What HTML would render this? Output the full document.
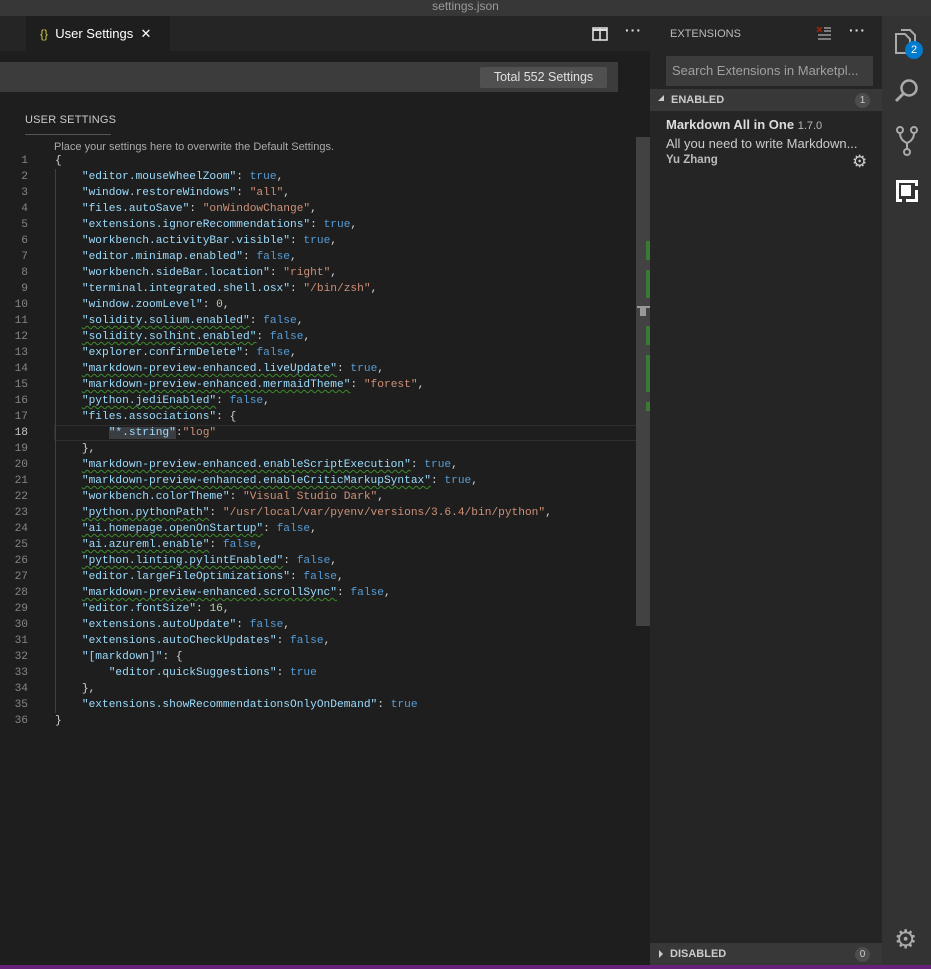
<!DOCTYPE html>
<html><head><meta charset="utf-8"><style>
*{margin:0;padding:0;box-sizing:border-box}
body{width:931px;height:969px;background:#1e1e1e;position:relative;overflow:hidden;font-family:"Liberation Sans",sans-serif;color:#ccc}
.abs{position:absolute}
#title{left:0;top:0;width:931px;height:16px;background:#373737;color:#9a9a9a;font-size:12px;text-align:center;line-height:12px;padding-top:0}
#tabs{left:0;top:16px;width:650px;height:35px;background:#252526}
#tab{left:26px;top:16px;width:144px;height:35px;background:#1e1e1e;font-size:13px;color:#fff;line-height:35px;padding-left:14px}
#hdr{left:0;top:62px;width:618px;height:30px;background:#3c3c3c}
#btn{left:480px;top:67px;width:127px;height:21px;background:#505050;color:#e0e0e0;font-size:12.5px;line-height:21px;text-align:center;border-radius:2px}
#us{left:25px;top:114px;font-size:11px;color:#ccc;letter-spacing:.2px}
#usl{left:25px;top:134px;width:86px;height:1px;background:#555}
#ph{left:54px;top:141px;font-size:11px;color:#aaa}
#code{left:0;top:153px;font-family:"Liberation Mono",monospace;font-size:11.2px;line-height:16px;white-space:pre}
.ln{display:inline-block;width:28px;text-align:right;color:#858585;margin-right:27px}
.k{color:#9cdcfe}.s{color:#ce9178}.b{color:#569cd6}.n{color:#b5cea8}.p{color:#d4d4d4}
.w{text-decoration:underline wavy #3f8a2a;text-decoration-thickness:1px;text-underline-offset:2px}
#guide{left:55px;top:169px;width:1px;height:544px;background:#404040}
#cur{left:54px;top:425px;width:596px;height:16px;border:1px solid #2e2e2e}
#sb{left:636px;top:137px;width:14px;height:489px;background:#424242}
#side{left:650px;top:16px;width:232px;height:949px;background:#252526}
#act{left:882px;top:16px;width:49px;height:949px;background:#333}
#status{left:0;top:965px;width:931px;height:4px;background:#68217a}
</style></head><body>
<div class="abs" id="title">settings.json</div>
<div class="abs" id="tabs"></div>
<div class="abs" id="tab"><span style="color:#cbcb41;font-size:12px">{}</span>&nbsp; User Settings &nbsp;<span style="font-size:13px">✕</span></div>
<svg class="abs" style="left:592px;top:27px" width="16" height="14"><rect x="1" y="1" width="14" height="12" fill="none" stroke="#ddd" stroke-width="1.6"/><line x1="8" y1="1" x2="8" y2="13" stroke="#ddd" stroke-width="1.6"/><line x1="1" y1="3" x2="15" y2="3" stroke="#ddd" stroke-width="2"/></svg>
<div class="abs" style="left:625px;top:22px;color:#ddd;font-size:14px;font-weight:bold;letter-spacing:1px">···</div>
<div class="abs" id="hdr"></div>
<div class="abs" id="btn">Total 552 Settings</div>
<div class="abs" id="us">USER SETTINGS</div>
<div class="abs" id="usl"></div>
<div class="abs" id="ph">Place your settings here to overwrite the Default Settings.</div>
<div class="abs" id="cur"></div>
<div class="abs" id="guide"></div>
<div class="abs" id="code"><span class="ln">1</span><span class="p">{</span>
<span class="ln">2</span>    <span class="k">"editor.mouseWheelZoom"</span><span class="p">: </span><span class="b">true</span><span class="p">,</span>
<span class="ln">3</span>    <span class="k">"window.restoreWindows"</span><span class="p">: </span><span class="s">"all"</span><span class="p">,</span>
<span class="ln">4</span>    <span class="k">"files.autoSave"</span><span class="p">: </span><span class="s">"onWindowChange"</span><span class="p">,</span>
<span class="ln">5</span>    <span class="k">"extensions.ignoreRecommendations"</span><span class="p">: </span><span class="b">true</span><span class="p">,</span>
<span class="ln">6</span>    <span class="k">"workbench.activityBar.visible"</span><span class="p">: </span><span class="b">true</span><span class="p">,</span>
<span class="ln">7</span>    <span class="k">"editor.minimap.enabled"</span><span class="p">: </span><span class="b">false</span><span class="p">,</span>
<span class="ln">8</span>    <span class="k">"workbench.sideBar.location"</span><span class="p">: </span><span class="s">"right"</span><span class="p">,</span>
<span class="ln">9</span>    <span class="k">"terminal.integrated.shell.osx"</span><span class="p">: </span><span class="s">"/bin/zsh"</span><span class="p">,</span>
<span class="ln">10</span>    <span class="k">"window.zoomLevel"</span><span class="p">: </span><span class="n">0</span><span class="p">,</span>
<span class="ln">11</span>    <span class="k w">"solidity.solium.enabled"</span><span class="p">: </span><span class="b">false</span><span class="p">,</span>
<span class="ln">12</span>    <span class="k w">"solidity.solhint.enabled"</span><span class="p">: </span><span class="b">false</span><span class="p">,</span>
<span class="ln">13</span>    <span class="k">"explorer.confirmDelete"</span><span class="p">: </span><span class="b">false</span><span class="p">,</span>
<span class="ln">14</span>    <span class="k w">"markdown-preview-enhanced.liveUpdate"</span><span class="p">: </span><span class="b">true</span><span class="p">,</span>
<span class="ln">15</span>    <span class="k w">"markdown-preview-enhanced.mermaidTheme"</span><span class="p">: </span><span class="s">"forest"</span><span class="p">,</span>
<span class="ln">16</span>    <span class="k w">"python.jediEnabled"</span><span class="p">: </span><span class="b">false</span><span class="p">,</span>
<span class="ln">17</span>    <span class="k">"files.associations"</span><span class="p">: {</span>
<span class="ln" style="color:#c6c6c6">18</span>        <span class="k" style="background:#3a3d41">"*.string"</span><span class="p">:</span><span class="s">"log"</span>
<span class="ln">19</span>    <span class="p">},</span>
<span class="ln">20</span>    <span class="k w">"markdown-preview-enhanced.enableScriptExecution"</span><span class="p">: </span><span class="b">true</span><span class="p">,</span>
<span class="ln">21</span>    <span class="k w">"markdown-preview-enhanced.enableCriticMarkupSyntax"</span><span class="p">: </span><span class="b">true</span><span class="p">,</span>
<span class="ln">22</span>    <span class="k">"workbench.colorTheme"</span><span class="p">: </span><span class="s">"Visual Studio Dark"</span><span class="p">,</span>
<span class="ln">23</span>    <span class="k w">"python.pythonPath"</span><span class="p">: </span><span class="s">"/usr/local/var/pyenv/versions/3.6.4/bin/python"</span><span class="p">,</span>
<span class="ln">24</span>    <span class="k w">"ai.homepage.openOnStartup"</span><span class="p">: </span><span class="b">false</span><span class="p">,</span>
<span class="ln">25</span>    <span class="k w">"ai.azureml.enable"</span><span class="p">: </span><span class="b">false</span><span class="p">,</span>
<span class="ln">26</span>    <span class="k w">"python.linting.pylintEnabled"</span><span class="p">: </span><span class="b">false</span><span class="p">,</span>
<span class="ln">27</span>    <span class="k">"editor.largeFileOptimizations"</span><span class="p">: </span><span class="b">false</span><span class="p">,</span>
<span class="ln">28</span>    <span class="k w">"markdown-preview-enhanced.scrollSync"</span><span class="p">: </span><span class="b">false</span><span class="p">,</span>
<span class="ln">29</span>    <span class="k">"editor.fontSize"</span><span class="p">: </span><span class="n">16</span><span class="p">,</span>
<span class="ln">30</span>    <span class="k">"extensions.autoUpdate"</span><span class="p">: </span><span class="b">false</span><span class="p">,</span>
<span class="ln">31</span>    <span class="k">"extensions.autoCheckUpdates"</span><span class="p">: </span><span class="b">false</span><span class="p">,</span>
<span class="ln">32</span>    <span class="k">"[markdown]"</span><span class="p">: {</span>
<span class="ln">33</span>        <span class="k">"editor.quickSuggestions"</span><span class="p">: </span><span class="b">true</span>
<span class="ln">34</span>    <span class="p">},</span>
<span class="ln">35</span>    <span class="k">"extensions.showRecommendationsOnlyOnDemand"</span><span class="p">: </span><span class="b">true</span>
<span class="ln">36</span><span class="p">}</span></div>
<div class="abs" id="sb"></div>
<div class="abs" style="left:646px;top:241px;width:4px;height:19px;background:#3b7a34"></div>
<div class="abs" style="left:646px;top:270px;width:4px;height:28px;background:#3b7a34"></div>
<div class="abs" style="left:646px;top:326px;width:4px;height:19px;background:#3b7a34"></div>
<div class="abs" style="left:646px;top:355px;width:4px;height:37px;background:#3b7a34"></div>
<div class="abs" style="left:646px;top:402px;width:4px;height:9px;background:#3b7a34"></div>
<div class="abs" style="left:637px;top:306px;width:13px;height:2px;background:#999"></div>
<div class="abs" style="left:640px;top:307px;width:6px;height:9px;background:#999"></div>
<div class="abs" id="side"></div>
<div class="abs" style="left:670px;top:28px;font-size:11px;color:#bbb">EXTENSIONS</div>
<svg class="abs" style="left:816px;top:26px" width="16" height="15"><path d="M1 1l5 5M6 1l-5 5" stroke="#a1260d" stroke-width="1.3"/><path d="M8 2h7M8 5h7M2 9h13M2 13h13" stroke="#999" stroke-width="1.5"/></svg>
<div class="abs" style="left:849px;top:22px;color:#ddd;font-size:14px;font-weight:bold;letter-spacing:1px">···</div>
<div class="abs" style="left:666px;top:56px;width:207px;height:30px;background:#3c3c3c;color:#a0a0a0;font-size:13px;line-height:30px;padding-left:6px;white-space:nowrap;overflow:hidden">Search Extensions in Marketpl...</div>
<div class="abs" style="left:650px;top:89px;width:232px;height:22px;background:#383838"></div>
<div class="abs" style="left:658px;top:95px;width:0;height:0;border-left:6px solid transparent;border-bottom:6px solid #ccc"></div>
<div class="abs" style="left:671px;top:94px;font-size:11px;font-weight:bold;color:#ccc">ENABLED</div>
<div class="abs" style="left:855px;top:93px;width:15px;height:15px;border-radius:8px;background:#4d4d4d;color:#ccc;font-size:10px;text-align:center;line-height:15px">1</div>
<div class="abs" style="left:666px;top:117px;font-size:13px;font-weight:bold;color:#ddd">Markdown All in One <span style="font-weight:normal;font-size:11px;color:#bbb">1.7.0</span></div>
<div class="abs" style="left:666px;top:136px;font-size:13px;color:#ccc">All you need to write Markdown...</div>
<div class="abs" style="left:666px;top:154px;font-size:11.5px;font-weight:bold;color:#bbb">Yu Zhang</div>
<div class="abs" style="left:852px;top:152px;font-size:17px;color:#ccc">⚙</div>
<div class="abs" style="left:650px;top:943px;width:232px;height:22px;background:#383838"></div>
<div class="abs" style="left:659px;top:950px;width:0;height:0;border-top:4px solid transparent;border-bottom:4px solid transparent;border-left:4px solid #ccc"></div>
<div class="abs" style="left:670px;top:948px;font-size:11px;font-weight:bold;color:#ccc">DISABLED</div>
<div class="abs" style="left:855px;top:947px;width:15px;height:15px;border-radius:8px;background:#4d4d4d;color:#ccc;font-size:10px;text-align:center;line-height:15px">0</div>
<div class="abs" id="act"></div>
<svg class="abs" style="left:894px;top:28px" width="26" height="28"><path d="M2 6h9l5 5v14H2z" fill="none" stroke="#aaa" stroke-width="2"/><path d="M7 2h9l5 5v10" fill="none" stroke="#aaa" stroke-width="2"/></svg>
<div class="abs" style="left:905px;top:41px;width:18px;height:18px;border-radius:9px;background:#007acc;color:#fff;font-size:11px;text-align:center;line-height:18px">2</div>
<svg class="abs" style="left:893px;top:77px" width="28" height="28"><circle cx="16" cy="11" r="7.5" fill="none" stroke="#aaa" stroke-width="2.5"/><path d="M11 16l-8 8" stroke="#aaa" stroke-width="3"/></svg>
<svg class="abs" style="left:895px;top:126px" width="24" height="30"><circle cx="5" cy="4" r="3" fill="none" stroke="#aaa" stroke-width="2"/><circle cx="19" cy="4" r="3" fill="none" stroke="#aaa" stroke-width="2"/><circle cx="12" cy="26" r="3" fill="none" stroke="#aaa" stroke-width="2"/><path d="M5 7q0 7 7 10M19 7q0 7-7 10v6" fill="none" stroke="#aaa" stroke-width="2"/></svg>
<svg class="abs" style="left:896px;top:180px" width="22" height="22"><path d="M0 0h22v22H0z" fill="#fff"/><rect x="3" y="3" width="16" height="16" fill="#333"/><rect x="5" y="5" width="10" height="11" fill="#fff"/><rect x="19" y="6" width="3" height="4" fill="#333"/><rect x="6" y="19" width="4" height="3" fill="#333"/></svg>
<div class="abs" style="left:894px;top:924px;font-size:26px;color:#aaa">⚙</div>
<div class="abs" id="status"></div>
</body></html>
